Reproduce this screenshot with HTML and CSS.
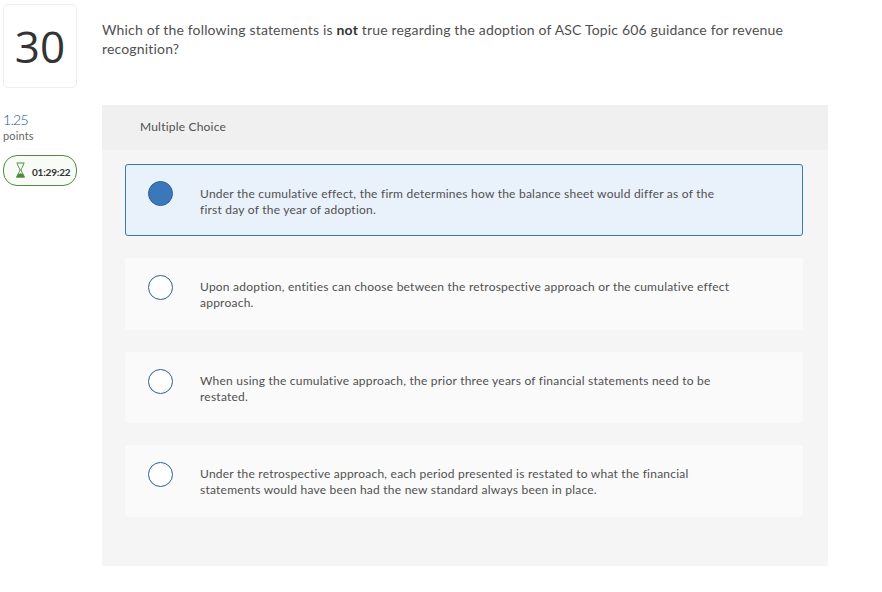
FILE: index.html
```html
<!DOCTYPE html>
<html lang="en">
<head>
<meta charset="utf-8">
<title>Question 30</title>
<link rel="stylesheet" href="styles.css">
</head>
<body>
<main class="page">
  <aside class="side">
    <div class="number">30</div>
    <div class="points-value">1.25</div>
    <div class="points-label">points</div>
    <div class="timer">
      <svg class="hourglass" width="11" height="16" viewBox="0 0 11 16" aria-hidden="true">
        <path d="M1.500 1h8M1.500 15h8" stroke="#4f8a3f" stroke-width="1.200" fill="none"/>
        <path d="M2.500 1.500c0 3.500 2.500 4.500 2.500 6.500s-2.500 3-2.500 6.500M8.500 1.500c0 3.500-2.500 4.500-2.500 6.500s2.500 3 2.500 6.500" stroke="#4f8a3f" stroke-width="1" fill="none"/>
        <path d="M1 15.500c.4-2.800 2.800-4 4.500-4.300 1.700.3 4.100 1.500 4.500 4.300z" fill="#4f8a3f"/>
      </svg>
      <span>01:29:22</span>
    </div>
  </aside>
  <section class="content">
    <p class="question">Which of the following statements is <strong>not</strong> true regarding the adoption of ASC Topic 606 guidance for revenue recognition?</p>
    <div class="panel">
      <header class="panel-head">Multiple Choice</header>
      <div class="options">
        <div class="option selected"><span class="radio"></span><p>Under the cumulative effect, the firm determines how the balance sheet would differ as of the first day of the year of adoption.</p></div>
        <div class="option"><span class="radio"></span><p>Upon adoption, entities can choose between the retrospective approach or the cumulative effect approach.</p></div>
        <div class="option"><span class="radio"></span><p>When using the cumulative approach, the prior three years of financial statements need to be restated.</p></div>
        <div class="option"><span class="radio"></span><p>Under the retrospective approach, each period presented is restated to what the financial statements would have been had the new standard always been in place.</p></div>
      </div>
    </div>
  </section>
</main>
</body>
</html>
```
FILE: styles.css
```css
* { box-sizing: border-box; }
html, body { margin: 0; padding: 0; background: #fff; }
body { font-family: Lato, "Open Sans", sans-serif; color: #505050; }
.page { display: flex; gap: 25px; padding: 4px 0 0 3px; width: 828px; }
.side { width: 74px; flex: none; }
.number {
  height: 84px; display: flex; align-items: center; justify-content: center;
  border: 1px solid #eee; border-radius: 5px;
  font-size: 44px; color: #333; font-family: "Open Sans", sans-serif;
}
.points-value { margin-top: 23px; font-size: 14px; font-weight: 300; letter-spacing: -.7px; line-height: 17px; color: #1a5596; }
.points-label { font-size: 11px; line-height: 14px; color: #666; margin-top: 1px; letter-spacing: .15px; }
.timer {
  margin-top: 12px; height: 31px; display: flex; align-items: center; gap: 6px; padding: 0 0 0 11px;
  border: 1px solid #4f8a3f; border-radius: 14px; background: #f8fbf6;
  font-size: 10px; font-weight: 700; letter-spacing: -.2px; color: #333;
}
.timer span { margin-top: 3px; }
.hourglass { flex: none; margin-top: -1px; }
.content { flex: 1; min-width: 0; }
.question { margin: 16px 0 0; height: 85px; font-size: 14px; line-height: 19px; letter-spacing: .17px; color: #505050; }
.question strong { color: #333; }
.panel { background: #f5f5f5; border-radius: 2px; height: 461px; }
.panel-head { height: 45px; padding: 0 38px 2px; display: flex; align-items: center; background: #f0f0f0; font-size: 12px; letter-spacing: .2px; color: #505050; }
.options { display: flex; flex-direction: column; gap: 22px; padding: 14px 25px 0 23px; }
.option {
  height: 71.5px; display: flex; gap: 27px; align-items: flex-start; padding: 16px 0 0 22px;
  background: #fafafa; border: 1px solid transparent; border-radius: 3px;
}
.option p { flex: none; width: 535px; margin: 4.4px 0 0; font-size: 12px; letter-spacing: .23px; line-height: 16px; color: #505050; }
.radio { flex: none; width: 25px; height: 25px; border-radius: 50%; background: #fff; border: 1px solid #2a6099; }
.selected { height: 72px; background: #e9f1fb; border-color: #3a77bb; }
.selected p { margin-top: 5px; }
.selected .radio { background: #3a77bb; border-color: #2a6099; }
```
